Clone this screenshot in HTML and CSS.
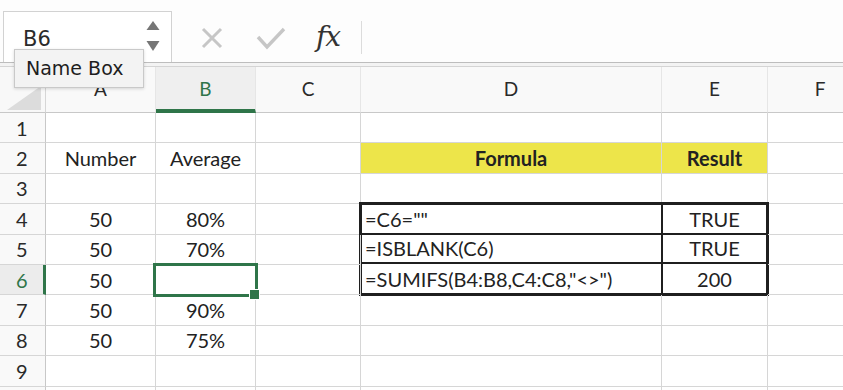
FILE: index.html
```html
<!DOCTYPE html>
<html lang="en">
<head>
    <meta charset="UTF-8">
    <meta name="viewport" content="width=device-width, initial-scale=1.0">
    <title>Blank cells - SUMIFS</title>
    <link rel="stylesheet" href="styles.css">
</head>
<body>
    <div class="sheet">
        <div class="formula-bar">
            <div class="name-box">
                <span class="cell-ref">B6</span>
                <span class="spinner">
                    <svg width="14" height="32" viewBox="0 0 14 32">
                        <polygon points="7,1 13.5,10 0.5,10" fill="#767676"/>
                        <polygon points="0.5,21 13.5,21 7,31" fill="#767676"/>
                    </svg>
                </span>
                <div class="tooltip">Name Box</div>
            </div>
            <div class="bar-buttons">
                <svg class="cancel" width="22" height="22" viewBox="0 0 22 22">
                    <path d="M2 2 L20 20 M20 2 L2 20" stroke="#c6c6c6" stroke-width="3" fill="none"/>
                </svg>
                <svg class="enter" width="30" height="24" viewBox="0 0 30 24">
                    <path d="M2 11 L11 21 L28 3" stroke="#c6c6c6" stroke-width="3.4" fill="none"/>
                </svg>
                <span class="fx">fx</span>
            </div>
            <div class="formula-input"></div>
        </div>
        <div class="bar-gap"></div>

        <div class="grid">
            <!-- column headers -->
            <div class="corner">
                <svg width="34" height="24" viewBox="0 0 34 24">
                    <polygon points="34,0 34,24 0,24" fill="#dcdcdc"/>
                </svg>
            </div>
            <div class="col-head">A</div>
            <div class="col-head active">B</div>
            <div class="col-head">C</div>
            <div class="col-head">D</div>
            <div class="col-head">E</div>
            <div class="col-head">F</div>

            <!-- row 1 -->
            <div class="row-head">1</div>
            <div class="cell"></div>
            <div class="cell"></div>
            <div class="cell"></div>
            <div class="cell"></div>
            <div class="cell"></div>
            <div class="cell"></div>

            <!-- row 2 -->
            <div class="row-head">2</div>
            <div class="cell center">Number</div>
            <div class="cell center">Average</div>
            <div class="cell"></div>
            <div class="cell center title">Formula</div>
            <div class="cell center title">Result</div>
            <div class="cell"></div>

            <!-- row 3 -->
            <div class="row-head">3</div>
            <div class="cell"></div>
            <div class="cell"></div>
            <div class="cell"></div>
            <div class="cell"></div>
            <div class="cell"></div>
            <div class="cell"></div>

            <!-- row 4 -->
            <div class="row-head">4</div>
            <div class="cell center">50</div>
            <div class="cell center">80%</div>
            <div class="cell"></div>
            <div class="result-box">
                <div class="box-cell">=C6=""</div>
                <div class="box-cell center">TRUE</div>
                <div class="box-cell">=ISBLANK(C6)</div>
                <div class="box-cell center">TRUE</div>
                <div class="box-cell">=SUMIFS(B4:B8,C4:C8,"&lt;&gt;")</div>
                <div class="box-cell center">200</div>
            </div>
            <div class="cell"></div>

            <!-- row 5 -->
            <div class="row-head">5</div>
            <div class="cell center">50</div>
            <div class="cell center">70%</div>
            <div class="cell"></div>
            <div class="cell"></div>

            <!-- row 6 -->
            <div class="row-head active">6</div>
            <div class="cell center">50</div>
            <div class="cell selected"><span class="fill-handle"></span></div>
            <div class="cell"></div>
            <div class="cell"></div>

            <!-- row 7 -->
            <div class="row-head">7</div>
            <div class="cell center">50</div>
            <div class="cell center">90%</div>
            <div class="cell"></div>
            <div class="cell"></div>
            <div class="cell"></div>
            <div class="cell"></div>

            <!-- row 8 -->
            <div class="row-head">8</div>
            <div class="cell center">50</div>
            <div class="cell center">75%</div>
            <div class="cell"></div>
            <div class="cell"></div>
            <div class="cell"></div>
            <div class="cell"></div>

            <!-- row 9 -->
            <div class="row-head">9</div>
            <div class="cell"></div>
            <div class="cell"></div>
            <div class="cell"></div>
            <div class="cell"></div>
            <div class="cell"></div>
            <div class="cell"></div>

            <!-- row 10 (cut off) -->
            <div class="row-head"></div>
            <div class="cell"></div>
            <div class="cell"></div>
            <div class="cell"></div>
            <div class="cell"></div>
            <div class="cell"></div>
            <div class="cell"></div>
        </div>
    </div>
</body>
</html>
```

FILE: styles.css
```css
body {
    margin: 0;
    padding: 0;
    background-color: #fff;
    color: #222;
    font-family: Lato, "Open Sans", sans-serif;
}
.sheet {
    width: 843px;
    height: 390px;
    overflow: hidden;
}

/* formula bar */
.formula-bar {
    display: flex;
    height: 63px;
    padding-top: 11px;
    box-sizing: border-box;
    border-bottom: 1px solid #bdbdbd;
    background-color: #fdfdfd;
}
.name-box {
    position: relative;
    width: 169px;
    margin-left: 3px;
    display: flex;
    align-items: center;
    justify-content: space-between;
    padding: 0 11px 0 19px;
    box-sizing: border-box;
    border: 1px solid #d2d2d2;
    border-bottom: none;
    background-color: #fff;
}
.cell-ref {
    font-family: "DejaVu Sans", sans-serif;
    font-size: 21px;
    color: #2b2b2b;
    margin-top: 4px;
}
.spinner {
    display: flex;
    margin-top: -3px;
}
.tooltip {
    position: absolute;
    left: 10px;
    top: 37px;
    width: 130px;
    height: 39px;
    box-sizing: border-box;
    padding-left: 11px;
    line-height: 37px;
    font-family: "DejaVu Sans", sans-serif;
    font-size: 19px;
    color: #1e1e1e;
    background-color: #f3f3f3;
    border: 1px solid #c9c9c9;
    box-shadow: 0 1px 3px rgba(0, 0, 0, 0.15);
    z-index: 5;
}
.bar-buttons {
    width: 190px;
    display: flex;
    align-items: center;
    padding: 0 0 3px 29px;
    box-sizing: border-box;
    border-right: 1px solid #dcdcdc;
    margin: 10px 0 8px;
}
.bar-buttons .cancel {
    margin-top: 3px;
}
.bar-buttons .enter {
    margin-left: 33px;
    margin-top: 3px;
}
.fx {
    margin-left: 30px;
    font-family: "DejaVu Serif", "Liberation Serif", serif;
    font-style: italic;
    font-size: 28px;
    color: #333;
    letter-spacing: -1px;
}
.formula-input {
    flex: 1;
    background-color: #fdfdfd;
}
.bar-gap {
    height: 3px;
    background-color: #f3f3f3;
    border-bottom: 1px solid #d4d4d4;
}

/* grid */
.grid {
    display: grid;
    grid-template-columns: 46px 110px 100px 105px 301px 106px 105px;
    grid-template-rows: 46px repeat(10, 30.4px);
    font-size: 20px;
}
.corner, .col-head, .row-head, .cell {
    box-sizing: border-box;
    border-right: 1px solid #d6d6d6;
    border-bottom: 1px solid #d6d6d6;
}
.corner {
    display: flex;
    align-items: flex-end;
    justify-content: flex-end;
    padding: 0 4px 2px 0;
    background-color: #f8f8f8;
    border-bottom-color: #c8c8c8;
}
.col-head {
    display: flex;
    align-items: center;
    justify-content: center;
    padding-bottom: 2px;
    font-size: 19px;
    background-color: #f9f9f9;
    border-right-color: #e6e6e6;
    border-bottom-color: #c8c8c8;
    color: #2a2a2a;
}
.col-head.active {
    background-color: #efefef;
    color: #2f7549;
    border-bottom: 4px solid #2f7549;
    padding-bottom: 0;
}
.row-head {
    display: flex;
    align-items: center;
    padding-left: 16px;
    background-color: #f9f9f9;
    border-right-color: #c8c8c8;
    color: #2a2a2a;
}
.row-head.active {
    background-color: #ececec;
    color: #2f7549;
    border-right: 3px solid #2f7549;
}
.cell {
    display: flex;
    align-items: center;
    padding: 0 5px;
    white-space: nowrap;
}
.center {
    justify-content: center;
}
.title {
    background-color: #ede54a;
    font-weight: bold;
    color: #222;
}
.cell.selected {
    position: relative;
}
.cell.selected::before {
    content: "";
    position: absolute;
    left: -3px;
    right: -3px;
    top: -2px;
    bottom: -3px;
    border: 3px solid #2f7549;
}
.fill-handle {
    position: absolute;
    right: -5px;
    bottom: -6px;
    width: 9px;
    height: 9px;
    background-color: #2f7549;
    border: 1px solid #fff;
    z-index: 2;
}

/* boxed formula table */
.result-box {
    grid-column: 5 / span 2;
    grid-row: 5 / span 3;
    margin: -2px -1px -1px -2px;
    display: grid;
    grid-template-columns: 1fr 103px;
    grid-template-rows: repeat(3, 1fr);
    border: 3px solid #1f1f1f;
    background-color: #fff;
}
.box-cell {
    display: flex;
    align-items: center;
    padding: 0 3px;
    white-space: nowrap;
    border-bottom: 2px solid #1f1f1f;
}
.box-cell:nth-child(odd) {
    border-right: 2px solid #1f1f1f;
}
.box-cell:nth-last-child(-n+2) {
    border-bottom: none;
}
```
